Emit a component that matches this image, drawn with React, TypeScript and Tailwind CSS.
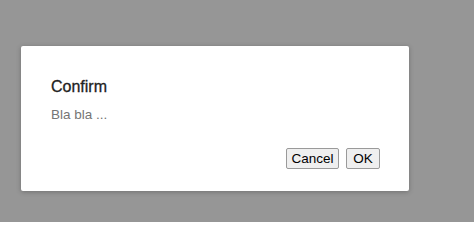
export default function App() {
  return (
    <div
      className="w-full h-[222px] bg-[#969696] pl-[21px] pt-[46px] overflow-hidden"
      style={{ fontFamily: '"Liberation Sans", Arial, sans-serif' }}
    >
      <div className="w-[388px] h-[145px] bg-white rounded-[2px] shadow-[0_1px_5px_rgba(0,0,0,0.25)] flex flex-col pl-[30px] pr-[29px] pt-[32px]">
        <div className="text-[16px] leading-[18px] text-[#222] [-webkit-text-stroke:0.3px_#222]">Confirm</div>
        <div className="mt-[11px] text-[13.5px] leading-[15px] text-[#757575]">Bla bla ...</div>
        <div className="mt-[26px] flex justify-end gap-[7px]">
          <button className="w-[53px] h-[21px] border border-[#9a9a9a] rounded-[2px] bg-[#efefef] text-[13.5px] text-black leading-none">
            Cancel
          </button>
          <button className="w-[34px] h-[21px] border border-[#9a9a9a] rounded-[2px] bg-[#efefef] text-[13.5px] text-black leading-none">
            OK
          </button>
        </div>
      </div>
    </div>
  );
}
